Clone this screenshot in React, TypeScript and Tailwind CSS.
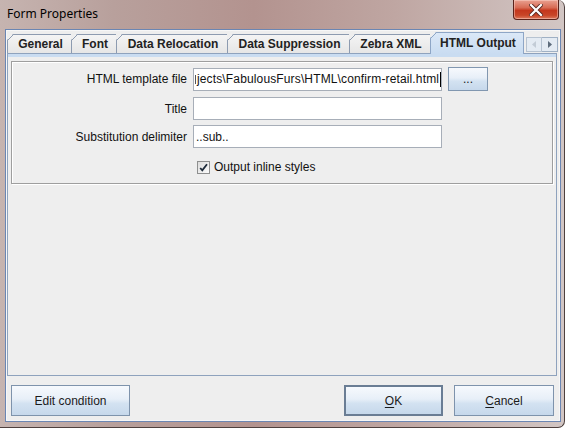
import React from "react";

const tabs = [
  { label: "General", w: "w-[64px]" },
  { label: "Font", w: "w-[45px]" },
  { label: "Data Relocation", w: "w-[111px]" },
  { label: "Data Suppression", w: "w-[122px]" },
  { label: "Zebra XML", w: "w-[81px]" },
];

function Corner({ fill, stroke }: { fill: string; stroke: string }) {
  return (
    <svg className="absolute left-[-1px] top-[-1px]" width="7" height="7" viewBox="0 0 7 7">
      <polygon points="0,0 6,0 0,6" fill={fill} />
      <line x1="0.5" y1="6.5" x2="6.5" y2="0.5" stroke={stroke} strokeWidth="1" />
    </svg>
  );
}

function Btn({ children, className }: { children: React.ReactNode; className: string }) {
  return (
    <div
      className={
        "flex items-center justify-center bg-[linear-gradient(180deg,#f6f9fd_0%,#e7eff8_45%,#d3e2f1_60%,#c6d8eb_100%)] text-[12px] text-[#1b1b1b] " +
        className
      }
    >
      {children}
    </div>
  );
}

export default function App() {
  return (
    <div className="w-[567px] h-[430px] bg-white overflow-hidden font-['Liberation_Sans',Arial,sans-serif]">
      <div className="w-[565px] h-[428px] flex flex-col rounded-tr-[7px] rounded-br-[7px] border-r border-b border-[#4e403e] bg-[linear-gradient(90deg,#c6b4b0_0%,#b8a09c_20%,#b3938f_45%,#bfa6a2_70%,#d2c6c4_100%)]">
        {/* title bar */}
        <div className="h-[29px] flex items-start justify-between pl-[7px] pr-[5px] shrink-0">
          <span className="mt-[6px] text-[12px] leading-[16px] text-black font-['Noto_Sans',sans-serif]">
            Form Properties
          </span>
          <div className="w-[46px] h-[20px] rounded-b-[4px] border border-t-0 border-[#5a231b] bg-[linear-gradient(180deg,#e9a191_0%,#d86c55_40%,#c4371d_55%,#c84527_80%,#dc7a5e_100%)] shadow-[inset_0_0_0_1px_rgba(255,220,210,0.45)] flex items-center justify-center">
            <svg width="14" height="12" viewBox="0 0 14 12">
              <path d="M2 1 L12 11 M12 1 L2 11" stroke="#5a2a22" strokeWidth="4" strokeLinecap="square" />
              <path d="M2 1 L12 11 M12 1 L2 11" stroke="#ffffff" strokeWidth="2.2" strokeLinecap="square" />
            </svg>
          </div>
        </div>

        {/* client area */}
        <div className="ml-[5px] w-[556px] h-[393px] border border-[#6b86b3] shrink-0">
          <div className="w-full h-full border border-[#f7f7f7] bg-[#eeeeee] flex flex-col">
            {/* tab row */}
            <div className="h-[21px] mt-[1px] flex items-end relative z-10">
              {tabs.map((t) => (
                <div
                  key={t.label}
                  className={
                    "relative h-[19px] border-l border-t border-[#8d9bb0] bg-[linear-gradient(180deg,#f4f4f4,#e6e6e6)] flex items-center justify-center text-[12px] font-bold text-[#222] " +
                    t.w
                  }
                >
                  <Corner fill="#eeeeee" stroke="#8d9bb0" />
                  <span className="pl-[2px]">{t.label}</span>
                </div>
              ))}
              <div className="relative w-[94px] h-[22px] -mb-[1px] border-l border-t border-r border-[#8ea6c6] bg-[linear-gradient(180deg,#dbe8f7,#c9dcf1)] flex items-center justify-center text-[12px] font-bold text-[#222]">
                <Corner fill="#eeeeee" stroke="#8ea6c6" />
                <span className="pl-[2px] pb-[1px]">HTML Output</span>
              </div>
              <div className="ml-[2px] mb-[1px] flex">
                <div className="w-[16px] h-[15px] border border-[#b7c3d1] bg-[#e4ebf3] flex items-center justify-center">
                  <svg width="4" height="7" viewBox="0 0 4 7">
                    <polygon points="4,0 0,3.5 4,7" fill="#c3ccd6" />
                  </svg>
                </div>
                <div className="w-[16px] h-[15px] border border-l-0 border-[#9fb0c4] bg-[#e4ebf3] flex items-center justify-center">
                  <svg width="4" height="7" viewBox="0 0 4 7">
                    <polygon points="0,0 4,3.5 0,7" fill="#5e6c7c" />
                  </svg>
                </div>
              </div>
            </div>

            {/* tab panel */}
            <div className="w-[550px] h-[323px] border border-[#8ea2bd] bg-[#eeeeee] flex flex-col">
              <div className="h-[3px] bg-[#c9dcf1] shrink-0" />
              <div className="px-[3px] pt-[4px]">
                <div className="h-[123px] border border-[#9e9e9e] shadow-[inset_1px_1px_0_#ffffff,1px_1px_0_#ffffff] flex flex-col text-[12px] text-[#111]">
                  {/* row 1 */}
                  <div className="mt-[5px] h-[24px] flex items-center">
                    <div className="w-[175px] text-right">HTML template file</div>
                    <div className="ml-[6px] w-[249px] h-[23px] border border-[#a7aeb8] bg-white flex items-center overflow-hidden whitespace-nowrap pl-[1px]">
                      <span className="w-[1px] h-[9px] bg-[#555] shrink-0" />
                      <span className="ml-[1px] tracking-[0.14px]">jects\FabulousFurs\HTML\confirm-retail.html</span>
                      <span className="ml-[1px] w-[1px] h-[15px] bg-black shrink-0" />
                    </div>
                    <Btn className="ml-[6px] w-[40px] h-[24px] border border-[#8197b0] text-[11px]">...</Btn>
                  </div>
                  {/* row 2 */}
                  <div className="mt-[6px] h-[23px] flex items-center">
                    <div className="w-[175px] text-right">Title</div>
                    <div className="ml-[6px] w-[249px] h-[23px] border border-[#a7aeb8] bg-white" />
                  </div>
                  {/* row 3 */}
                  <div className="mt-[5px] h-[23px] flex items-center">
                    <div className="w-[175px] text-right">Substitution delimiter</div>
                    <div className="ml-[6px] w-[249px] h-[23px] border border-[#a7aeb8] bg-white flex items-center px-[2px]">
                      ..sub..
                    </div>
                  </div>
                  {/* checkbox */}
                  <div className="mt-[12px] h-[14px] flex items-center pl-[185px]">
                    <div className="w-[13px] h-[13px] border border-[#8e8f8f] bg-[linear-gradient(135deg,#dcdcdc,#fbfbfb)] flex items-center justify-center">
                      <svg width="9" height="9" viewBox="0 0 9 9">
                        <path d="M1.2 5 L3.3 7.4 L8 1.2" stroke="#1d2a3a" strokeWidth="1.8" fill="none" />
                      </svg>
                    </div>
                    <span className="ml-[4px]">Output inline styles</span>
                  </div>
                </div>
              </div>
            </div>

            {/* bottom buttons */}
            <div className="mt-[9px] flex items-center pl-[4px] pr-[5px]">
              <Btn className="w-[119px] h-[31px] border border-[#7e93ac]">Edit condition</Btn>
              <div className="flex-1" />
              <Btn className="w-[99px] h-[31px] border-2 border-[#6a7d94]">
                <span>
                  <span className="underline underline-offset-2">O</span>K
                </span>
              </Btn>
              <Btn className="ml-[11px] w-[100px] h-[31px] border border-[#7e93ac]">
                <span>
                  <span className="underline underline-offset-2">C</span>ancel
                </span>
              </Btn>
            </div>
          </div>
        </div>
      </div>
    </div>
  );
}
